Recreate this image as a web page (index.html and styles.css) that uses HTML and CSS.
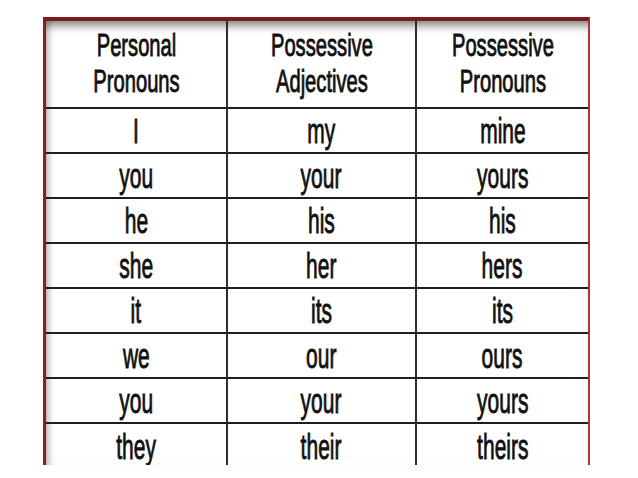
FILE: index.html
```html
<!DOCTYPE html>
<html>
<head>
<meta charset="utf-8">
<link rel="stylesheet" href="styles.css">
</head>
<body>
<div class="frame">
  <div class="grid">
    <div class="cell head"><span class="txt">Personal<br>Pronouns</span></div>
    <div class="cell head"><span class="txt">Possessive<br>Adjectives</span></div>
    <div class="cell head last"><span class="txt">Possessive<br>Pronouns</span></div>

    <div class="cell"><span class="txt">I</span></div>
    <div class="cell"><span class="txt">my</span></div>
    <div class="cell last"><span class="txt">mine</span></div>

    <div class="cell"><span class="txt">you</span></div>
    <div class="cell"><span class="txt">your</span></div>
    <div class="cell last"><span class="txt">yours</span></div>

    <div class="cell"><span class="txt">he</span></div>
    <div class="cell"><span class="txt">his</span></div>
    <div class="cell last"><span class="txt">his</span></div>

    <div class="cell"><span class="txt">she</span></div>
    <div class="cell"><span class="txt">her</span></div>
    <div class="cell last"><span class="txt">hers</span></div>

    <div class="cell"><span class="txt">it</span></div>
    <div class="cell"><span class="txt">its</span></div>
    <div class="cell last"><span class="txt">its</span></div>

    <div class="cell"><span class="txt">we</span></div>
    <div class="cell"><span class="txt">our</span></div>
    <div class="cell last"><span class="txt">ours</span></div>

    <div class="cell"><span class="txt">you</span></div>
    <div class="cell"><span class="txt">your</span></div>
    <div class="cell last"><span class="txt">yours</span></div>

    <div class="cell end"><span class="txt">they</span></div>
    <div class="cell end"><span class="txt">their</span></div>
    <div class="cell end last"><span class="txt">theirs</span></div>
  </div>
</div>
</body>
</html>
```
FILE: styles.css
```css
html, body {
  margin: 0;
  padding: 0;
  background: #ffffff;
}
body {
  padding: 17px 0 0 43px;
  font-family: "Liberation Sans", Arial, sans-serif;
  color: #111111;
}
.frame {
  width: 547px;
  height: 448px;
  box-sizing: border-box;
  border-top: 4px solid #7e1a1c;
  border-left: 3px solid #8a1e22;
  border-right: 2px solid #b0333a;
  overflow: hidden;
  box-shadow: inset 0 11px 9px -6px rgba(0, 0, 0, 0.45),
              inset 7px 0 6px -4px rgba(0, 0, 0, 0.28);
}
.grid {
  display: grid;
  grid-template-columns: 182px 189px 1fr;
  grid-template-rows: 88px repeat(8, 45px);
}
.cell {
  box-sizing: border-box;
  border-right: 2px solid #2e2e2e;
  border-bottom: 2px solid #1e1e1e;
  display: flex;
  align-items: center;
  justify-content: center;
  overflow: hidden;
}
.cell.last {
  border-right: none;
}
.cell.end {
  border-bottom: none;
}
.txt {
  display: inline-block;
  font-size: 35px;
  line-height: 40px;
  text-align: center;
  white-space: nowrap;
  transform: scaleX(0.6);
  -webkit-text-stroke: 0.9px #111111;
}
.head .txt {
  font-size: 32px;
  line-height: 36px;
  transform: scaleX(0.63);
  padding-bottom: 2px;
}
```
